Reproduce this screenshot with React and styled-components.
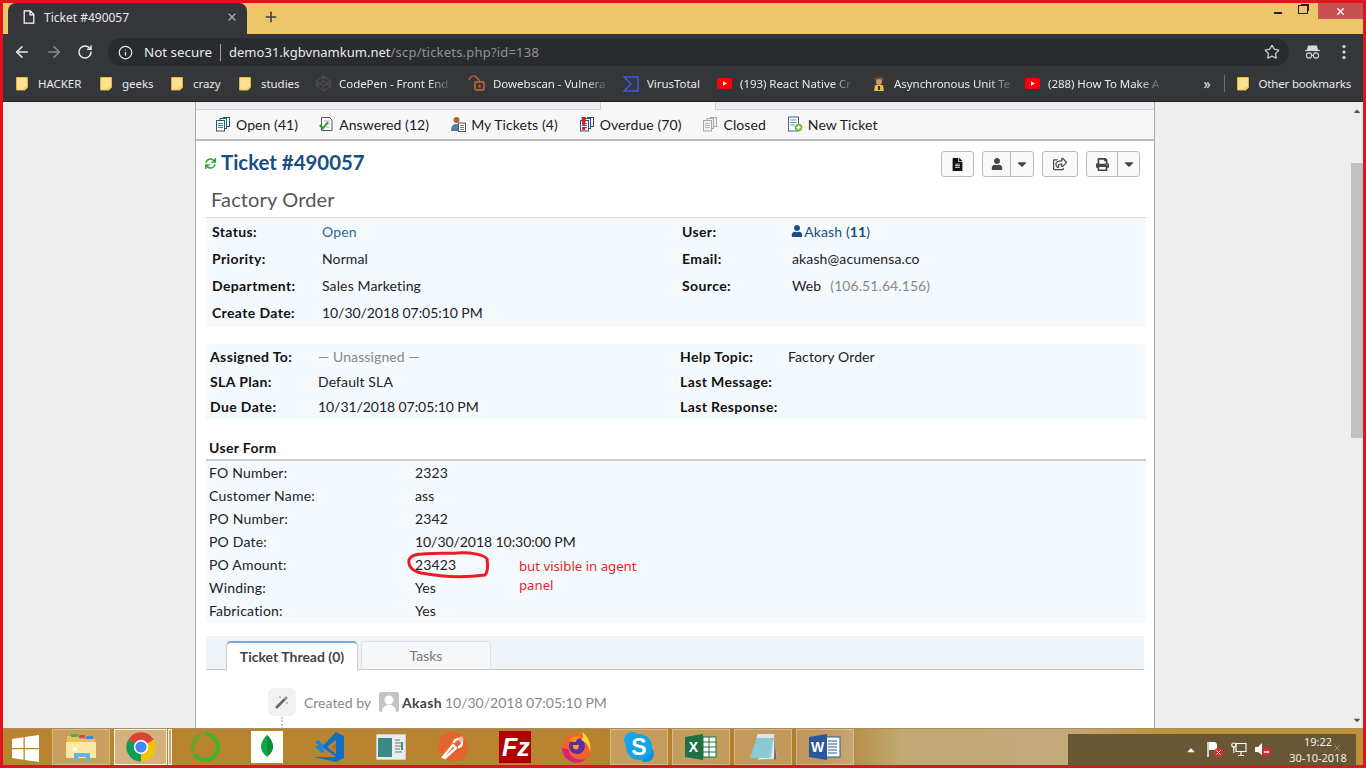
import React from "react";
import styled, { createGlobalStyle } from "styled-components";
import { ArrowLeft, ArrowRight, RotateCw, Info, Star, Plus, X } from "lucide-react";
import { FaSync, FaFileAlt, FaUser, FaRegShareSquare, FaPrint, FaCaretDown, FaCaretUp } from "react-icons/fa";

const Global = createGlobalStyle`
  html, body { margin: 0; padding: 0; overflow: hidden; background: #eee; }
  * { box-sizing: border-box; }
`;

const Frame = styled.div`
  width: 1366px; height: 768px; border: 3px solid #e0141f;
  display: flex; flex-direction: column; overflow: hidden;
  font-family: "Lato", "Liberation Sans", sans-serif; position: relative;
`;
const TitleBar = styled.div`
  height: 31px; background: #eec66a; display: flex; align-items: stretch; flex: none;
`;
const BrowserTab = styled.div`
  width: 239px; margin-left: 5px; background: #35363a; border-radius: 8px 8px 0 0;
  display: flex; align-items: center; padding: 0 9px 3px 15px; color: #e8eaed;
  font: 12px "Noto Sans", "Open Sans", sans-serif; flex: none;
`;
const TabTitle = styled.span` margin-left: 9px; flex: 1; color: #e8eaed; `;
const NewTab = styled.div`
  margin-left: 16px; padding-bottom: 3px; display: flex; align-items: center; color: #3c4043;
`;
const WindowControls = styled.div`
  margin-left: auto; display: flex; align-items: flex-start;
`;
const MinBtn = styled.div`
  width: 8px; height: 2px; background: #222; margin: 9px 16px 0 0;
`;
const RestoreBtn = styled.div`
  width: 10px; height: 9px; margin: 2px 10px 0 0; border: 1.5px solid #222; position: relative;
  box-shadow: 2px -2px 0 -1px #222;
`;
const CloseBtn = styled.div`
  width: 45px; height: 16px; background: #c75050; color: #fff; display: flex; align-items: center; justify-content: center;
`;
const Toolbar = styled.div`
  height: 32px; background: #35363a; display: flex; align-items: center; flex: none; padding: 4px 0 0 10px;
`;
const NavIcon = styled.div`
  width: 32px; display: flex; justify-content: flex-start; color: ${p => p.$dim ? "#8a8c8f" : "#e8eaed"};
`;
const Omnibox = styled.div`
  width: 1181px; height: 28px; margin-left: -1px; background: #292b2e; border-radius: 14px; display: flex; align-items: center;
  padding: 0 10px; color: #e8eaed; font: 13px "Noto Sans", "Open Sans", sans-serif; flex: none;
`;
const InfoSlot = styled.span` display: flex; width: 26px; color: #e8eaed; `;
const Secure = styled.span` font-size: 13.400px; width: 76px; `;
const Sep = styled.span` width: 1px; height: 17px; background: #9aa0a6; margin-right: 8px; `;
const Host = styled.span` color: #e8eaed; letter-spacing: .02px; `;
const UrlPath = styled.span` color: #8f9297; letter-spacing: .2px; `;
const StarSlot = styled.span` margin-left: auto; display: flex; color: #c4c7ca; margin-right: -1px; `;
const RightIcons = styled.div` display: flex; align-items: center; margin-left: 16px; gap: 22px; `;

const Bookmarks = styled.div`
  height: 36px; background: #35363a; border-bottom: 1px solid #202124; display: flex; align-items: center; padding-left: 13px; flex: none;
  color: #e8eaed; font: 11.500px "Noto Sans", "Open Sans", sans-serif; letter-spacing: -.05px;
`;
const Bookmark = styled.div`
  width: ${p => p.$w}px; display: flex; align-items: center; gap: ${p => p.$gap || 6}px; flex: none; white-space: nowrap;
`;
const BookmarkText = styled.span`
  display: block;
  ${p => p.$fade ? "mask-image: linear-gradient(90deg,#000 82%,rgba(0,0,0,.2));" : ""}
`;
const OtherText = styled.span` letter-spacing: -.18px; `;
const BookmarkEnd = styled.div`
  margin-left: auto; display: flex; align-items: center; gap: 6px; padding-right: 12px;
`;
const Chevrons = styled.span` font-size: 14px; margin-right: 7px; `;
const BarSep = styled.span` width: 1px; height: 17px; background: #6a6c70; margin-right: 6px; `;

const PageArea = styled.div`
  flex: 1; min-height: 0; display: flex; background: #eee; overflow: hidden;
`;
const Gutter = styled.div` width: 192px; flex: none; `;
const Panel = styled.div`
  width: 960px; flex: none; background: #fff; border-left: 1px solid #aaa; border-right: 1px solid #aaa;
  overflow: hidden; display: flex; flex-direction: column;
`;
const TopTabs = styled.div`
  height: 8px; flex: none; background: #eee; border-bottom: 1px solid #c9d5e0; display: flex; padding-left: 404px;
`;
const ActiveTop = styled.div`
  width: 116px; height: 8px; background: #f7f7f7; border-left: 1px solid #c9d5e0; border-right: 1px solid #c9d5e0;
`;
const SubNav = styled.div`
  height: 31px; flex: none; background: #f7f7f7; border-bottom: 2px solid #bbb; display: flex; align-items: center; padding: 0 0 1px 19px; gap: 21px;
`;
const NavItem = styled.div`
  display: flex; align-items: center; gap: 5px; font-size: 14px; color: #1a1a24; letter-spacing: .08px;
`;
const TitleRow = styled.div`
  height: 45px; flex: none; display: flex; align-items: center; padding: 1px 14px 0 9px;
`;
const TicketTitle = styled.h2`
  margin: 0 0 4px 5px; font-size: 20.400px; font-weight: 700; color: #184e81; line-height: 1;
`;
const Sync = styled.span` display: flex; color: #2ba52b; margin-bottom: 2px; `;
const ActionRow = styled.div` margin-left: auto; display: flex; gap: 8px; `;
const ActionBtn = styled.div`
  height: 26px; border: 1px solid #bbb; border-radius: 3px; background: #f9f9f9; display: flex; color: #444; font-size: 12px;
`;
const ActionPart = styled.div`
  width: ${p => p.$w}px; display: flex; align-items: center; justify-content: center; color: ${p => p.$c || "#444"};
  & + & { border-left: 1px solid #bbb; }
`;
const Subject = styled.h3`
  margin: 0; padding-left: 15px; height: 31px; flex: none; font-weight: 400; font-size: 20px; color: #555; line-height: 27px; letter-spacing: .15px;
`;
const Section = styled.div` margin-left: 10px; width: 940px; flex: none; `;
const InfoTable = styled.div`
  background: #f4f9fe; display: grid; grid-template-columns: ${p => p.$cols}; padding-left: ${p => p.$pad}px;
  grid-auto-rows: ${p => p.$row}px; align-items: center; font-size: 14px; color: #222;
  ${p => p.$top ? "border-top: 1px solid #ddd; padding-bottom: 1px; margin-bottom: 17px;" : "margin-bottom: 20px;"}
`;
const Label = styled.b` font-weight: 700; color: #111; letter-spacing: .38px; `;
const Value = styled.span`
  color: ${p => p.$c || "#222"}; letter-spacing: ${p => p.$date ? "-.06px" : ".12px"};
`;
const UserValue = styled(Value)`
  & svg { margin-right: -2px; margin-left: -1px; }
`;
const FormKey = styled.span` color: #222; letter-spacing: .2px; `;
const Muted = styled.span` color: #888; margin-left: 9px; letter-spacing: .08px; `;
const FormHead = styled.div`
  height: 22px; padding-left: 3px; border-bottom: 2px solid #ccc; font-size: 14px; font-weight: 700; color: #111; line-height: 17px; letter-spacing: .35px;
`;
const FormWrap = styled.div` position: relative; `;
const FormTable = styled.div`
  background: #f4f9fe; display: grid; grid-template-columns: 206px 1fr; padding-left: 3px; height: 161px;
  grid-auto-rows: 23px; align-items: center; font-size: 14px; color: #222;
`;
const Ring = styled.svg` position: absolute; left: 201px; top: 90px; `;
const Note = styled.div`
  position: absolute; left: 313px; top: 96px; width: 140px; color: #ed1c24; font: 13.200px/19px "Noto Sans", sans-serif;
`;
const TabStrip = styled.div`
  margin-top: 14px; height: 34px; width: 938px; background: #eef3f7; border-bottom: 1px solid #c8c8c8; display: flex; align-items: flex-end; padding-left: 20px; gap: 3px;
`;
const ThreadTab = styled.div`
  height: 29px; width: ${p => p.$w}px; border-radius: 5px 5px 0 0; display: flex; align-items: center; justify-content: center; font-size: 14px;
  margin-bottom: -1px;
  ${p => p.$active
    ? "background:#fff; border:1px solid #ccc; border-top:2px solid #7aa5d8; border-bottom:none; font-weight:700; color:#444;"
    : "background:#f5f7f9; border:1px solid #dde; border-bottom:1px solid #c8c8c8; color:#777; margin-bottom:-1px;"}
`;
const ThreadRow = styled.div`
  margin: 18px 0 0 62px; display: flex; align-items: center; font-size: 14px; color: #888;
`;
const WandBox = styled.div`
  width: 28px; height: 28px; border-radius: 6px; background: #f1f1f1; display: flex; align-items: center; justify-content: center; margin-right: 8px;
`;
const Avatar = styled.svg` margin: 0 3px 0 8px; `;
const Author = styled.b` color: #444; margin-right: 3px; letter-spacing: .3px; `;
const Dots = styled.div` margin: 1px 0 0 75px; height: 12px; border-left: 2px dotted #ccc; `;
const RightGutter = styled.div` flex: 1; `;
const Scrollbar = styled.div`
  width: 12px; flex: none; background: #eee; display: flex; flex-direction: column; align-items: center; color: #555; font-size: 10px;
`;
const ScrollArrow = styled.div` height: 17px; display: flex; align-items: center; justify-content: center; `;
const ScrollThumb = styled.div` width: 12px; height: 275px; margin-top: 44px; background: #c1c1c1; `;
const ScrollEnd = styled.div` margin-top: auto; height: 17px; display: flex; align-items: center; `;

const Taskbar = styled.div`
  height: 37px; flex: none; display: flex; position: relative; padding-left: 47px; border-top: 1px solid #a98f60;
  background: linear-gradient(90deg,#b9842f 0,#b9842f 40%,#b07c2e 60%,#c2a873 66%,#c4a97a 78%,#bb9238 86%,#bb9238 100%);
`;
const StartBtn = styled.div`
  position: absolute; left: 9px; top: 6px;
`;
const Slot = styled.div`
  width: 62px; flex: none; display: flex; align-items: center; justify-content: center; margin: 0;
`;
const OpenApp = styled(Slot)`
  width: 58px; margin: 0 2px; background: rgba(255,255,255,.22); border: 1px solid rgba(255,255,255,.28);
`;
const ActiveApp = styled(Slot)`
  width: 53px; margin: 0 1px 0 2px; background: rgba(255,255,255,.38); border: 1px solid rgba(255,255,255,.8);
`;
const Sliver = styled.div`
  width: 4px; margin-right: 2px; flex: none; background: rgba(255,255,255,.3); border: 1px solid rgba(255,255,255,.8);
`;
const Tray = styled.div`
  margin-left: auto; margin-right: 7px; align-self: flex-end; width: 288px; height: 31px; background: #685634;
  display: flex; align-items: center; padding-left: 111px; color: #eee;
`;
const TrayIcon = styled.span` width: 24px; display: flex; justify-content: center; color: #fff; `;
const Clock = styled.div`
  margin-left: 14px; font: 11px/16px "Noto Sans", sans-serif; text-align: center; width: 58px; color: #f0f0f0; position: relative;
`;
const Hide = styled.span` position: absolute; left: 43px; top: 9px; display: flex; color: #b9b88a; `;

/* ---------- drawings ---------- */
const DocIcon = () => (
  <svg width="12" height="14" viewBox="0 0 12 14" fill="none" stroke="#fff" strokeWidth="1.2"><path d="M1.2.8h6l3.6 3.6v8.8H1.2zM7 .8v4h3.8" /></svg>
);
const Folder = () => (
  <svg width="16" height="16" viewBox="0 0 16 16" style={{ flex: "none" }}>
    <path d="M.6 1.500h10.800v10l-2.500 2.500H.6z" fill="#fde293" stroke="#eabb3d" />
    <path d="M8.500 14.500v-3h3.500" fill="#eabb3d" />
  </svg>
);
const Incognito = () => (
  <svg width="15" height="16" viewBox="0 0 15 16" fill="none" stroke="#d7d9db" strokeWidth="1.1">
    <path d="M3.500 2h8l1 4h-10z" fill="#d7d9db" /><path d="M0 6.500h15" />
    <circle cx="4" cy="11.500" r="2.600" /><circle cx="11" cy="11.500" r="2.600" /><path d="M6.600 11.500h1.800" />
  </svg>
);
const MenuDots = () => (
  <svg width="4" height="14" viewBox="0 0 4 14" fill="#d7d9db"><circle cx="2" cy="1.600" r="1.600" /><circle cx="2" cy="7" r="1.600" /><circle cx="2" cy="12.400" r="1.600" /></svg>
);
const CodePen = () => (
  <svg width="17" height="17" viewBox="0 0 17 17" fill="none" stroke="#4a4b4e" strokeWidth="1.2"><path d="M8.500 1l7 5v5l-7 5-7-5V6zM8.500 1v5M8.500 11v5M1.500 6l7 5 7-5M1.500 11l7-5 7 5" /></svg>
);
const Lock = () => (
  <svg width="17" height="17" viewBox="0 0 17 17" fill="none"><path d="M1 5C2 1 6 0 8 2l4 4" stroke="#c8643a" strokeWidth="1.2" /><rect x="7" y="7" width="9" height="8" rx="1" stroke="#d36a3c" strokeWidth="1.4" /><rect x="10.500" y="10" width="2" height="2.500" fill="#d36a3c" /></svg>
);
const VirusTotal = () => (
  <svg width="16" height="16" viewBox="0 0 16 16" fill="none" stroke="#3a5bf0" strokeWidth="1.4"><path d="M1 1h14v14H1l7-7z" /></svg>
);
const YouTube = () => (
  <svg width="15" height="11" viewBox="0 0 15 11"><rect width="15" height="11" rx="2.500" fill="#f00" /><path d="M6 3.200l4 2.300-4 2.300z" fill="#fff" /></svg>
);
const Mascot = () => (
  <svg width="14" height="16" viewBox="0 0 14 16"><ellipse cx="7" cy="3" rx="5" ry="2" fill="#7a4a2a" /><circle cx="7" cy="6" r="3" fill="#c99a6a" /><path d="M3 9h8l1 6H2z" fill="#e4c13a" /><path d="M6 10h2v4H6z" fill="#3a2a1a" /></svg>
);

const Stack = ({ c, fill = "#fff" }) => (
  <g fill={fill} stroke={c} strokeWidth="1">
    <rect x="8.500" y="1.500" width="6" height="9" /><rect x="5" y="2.500" width="6.500" height="10" /><rect x="1.500" y="4.500" width="8" height="10.500" />
    <path d="M3 7.500h5M3 9.500h5M3 11.500h5" strokeWidth=".8" />
  </g>
);
const IconOpen = () => <svg width="16" height="16" viewBox="0 0 16 16"><Stack c="#1f5b7e" /></svg>;
const IconClosed = () => <svg width="16" height="16" viewBox="0 0 16 16"><Stack c="#a8a8a8" fill="#f2f2f2" /></svg>;
const IconAnswered = () => (
  <svg width="15" height="16" viewBox="0 0 15 16"><path d="M2.500 1.500h8l2.500 2.500v10.500h-10.500z" fill="#fff" stroke="#555" /><path d="M5 5h6M6 8h5M7 11h4" stroke="#999" strokeWidth=".8" /><path d="M.8 9l3 3.500L9 6" fill="none" stroke="#2e9a36" strokeWidth="2" /></svg>
);
const IconMine = () => (
  <svg width="16" height="16" viewBox="0 0 16 16"><circle cx="6.500" cy="4" r="3" fill="#a9683a" /><path d="M1 15c0-5 2-7 5-7s4 1 4 2v5z" fill="#4f7ea6" /><rect x="8.500" y="7" width="7" height="8.500" fill="#fff" stroke="#555" /><path d="M10 9.500h4M10 11.500h4M10 13.500h4" stroke="#555" strokeWidth=".8" /></svg>
);
const IconOverdue = () => (
  <svg width="16" height="16" viewBox="0 0 16 16"><Stack c="#2a4f80" /><path d="M2.500 1h4.500l-1 8.500h-2.500z" fill="#e01818" /><rect x="3.200" y="11" width="3" height="3" fill="#e01818" /></svg>
);
const IconNew = () => (
  <svg width="16" height="16" viewBox="0 0 16 16"><rect x="1.500" y="1" width="10" height="14" fill="#fff" stroke="#3b6a98" /><path d="M3.500 4h6M3.500 6.500h6M3.500 9h4" stroke="#5d92bb" /><circle cx="11.500" cy="11.500" r="3.800" fill="#6dba2f" /><path d="M9.500 11.500h4M11.500 9.500v4" stroke="#fff" strokeWidth="1.400" /></svg>
);
const Wand = () => (
  <svg width="16" height="16" viewBox="0 0 16 16"><path d="M2 14L11 5" stroke="#666" strokeWidth="2.600" /><path d="M11 5l2-2" stroke="#999" strokeWidth="2.600" /><path d="M5 3h2M6 2v2M12 9h2M13 8v2" stroke="#aaa" /></svg>
);

const Win = () => (
  <svg width="27" height="27" viewBox="0 0 27 27" fill="#fff"><path d="M0 4l11.500-1.700V13H0zM12.800 2.100L27 0v13H12.800zM0 14.300h11.500v10.500L0 23zM12.800 14.300H27V27l-14.200-2z" /></svg>
);
const Explorer = () => (
  <svg width="32" height="32" viewBox="0 0 32 32"><path d="M2 5h11l2 3h15v10H2z" fill="#e8c256" /><rect x="6" y="3" width="7" height="3" fill="#4bb04b" /><rect x="14" y="4" width="6" height="3" fill="#d9463c" /><rect x="21" y="5" width="7" height="3" fill="#2f8fd8" /><path d="M1 11h30v16H1z" fill="#fbe9a4" /><path d="M9 22h16v8h-4v-4h-8v4H9z" fill="#63b3e8" /><circle cx="10" cy="18" r="2" fill="#fff" /></svg>
);
const Chrome = () => (
  <svg width="32" height="32" viewBox="0 0 24 24"><path d="M12 12L2.470 6.500A11 11 0 0 1 21.530 6.500z" fill="#db4437" /><path d="M12 12L21.530 6.500A11 11 0 0 1 12 23z" fill="#f4c20d" /><path d="M12 12L12 23A11 11 0 0 1 2.470 6.500z" fill="#0f9d58" /><circle cx="12" cy="12" r="5.400" fill="#fff" /><circle cx="12" cy="12" r="4.200" fill="#4285f4" /></svg>
);
const GreenRing = () => (
  <svg width="32" height="32" viewBox="0 0 32 32" fill="none"><path d="M16 3a13 13 0 1 1-11 20" stroke="#3fb42f" strokeWidth="4" /><path d="M4.500 21a13 13 0 0 1 8-17" stroke="#3fb42f" strokeWidth="4" strokeDasharray="2 1.500" /></svg>
);
const Mongo = () => (
  <svg width="32" height="32" viewBox="0 0 32 32"><rect width="32" height="32" fill="#fff" /><path d="M16 4c5 5 6 9 6 12s-3 8-5.500 9l-.5 3-.5-3C13 24 10 19 10 16s1-7 6-12z" fill="#13a54a" /><path d="M16 4c5 5 6 9 6 12s-3 8-5.500 9z" fill="#0c8a3c" /></svg>
);
const VSCode = () => (
  <svg width="32" height="32" viewBox="0 0 32 32"><path d="M23 1l8 4v22l-8 4L1 26l22 0V1z" fill="#0f6fc6" /><path d="M23 1v8L14 16l9 7v3L9 16z" fill="#0f6fc6" /><path d="M2 11l3-2 7 6-3 2 3 3-3 2-7-6 4-2z" fill="#1a83db" /><path d="M18 16l5-4v8z" fill="#b0703a" /></svg>
);
const WindowApp = () => (
  <svg width="30" height="26" viewBox="0 0 30 26"><rect width="30" height="26" fill="#e9edf0" stroke="#aab" /><rect x="2" y="4" width="14" height="19" fill="#3c8a86" /><path d="M19 6h5M19 9h7M19 12h7M19 15h5M19 18h7" stroke="#777" /><rect x="25" y="8" width="2" height="8" fill="#3a9a5a" /></svg>
);
const PostApp = () => (
  <svg width="32" height="32" viewBox="0 0 32 32"><circle cx="16" cy="16" r="15" fill="#e4632f" /><path d="M6 26l10-12 3 3-11 10zM17 12a4 4 0 1 1 4 4" stroke="#fff" strokeWidth="2.400" fill="none" /><circle cx="24" cy="8" r="2.500" fill="#f2b9a0" /></svg>
);
const FileZilla = () => (
  <svg width="32" height="32" viewBox="0 0 32 32"><rect width="32" height="32" fill="#b30000" stroke="#7d0000" strokeDasharray="1.500 1.500" /><text x="3" y="25" fontFamily="Liberation Sans" fontWeight="700" fontStyle="italic" fontSize="25" fill="#fff">Fz</text></svg>
);
const Firefox = () => (
  <svg width="32" height="32" viewBox="0 0 32 32"><circle cx="15.500" cy="17" r="14.500" fill="#f2622e" /><path d="M1 17a14.500 14.500 0 0 0 24 11c-8 2-16-1-18-10z" fill="#d6246e" /><circle cx="16" cy="15" r="8" fill="#5a2fa6" /><path d="M21 1c6 4 10 12 8 20-1-6-4-10-9-12 3-2 2-5 1-8z" fill="#ffd23a" /><path d="M8 10c3-5 9-6 13-3-4 0-6 2-6 4-2 0-4 0-7-1z" fill="#f79020" /><path d="M12 14h6l-1 4c-2 1-4 0-5-1z" fill="#ff9a2a" /></svg>
);
const Skype = () => (
  <svg width="32" height="32" viewBox="0 0 32 32"><circle cx="9" cy="9" r="8" fill="#12a8ee" /><circle cx="23" cy="23" r="8" fill="#0d8fe0" /><circle cx="16" cy="16" r="13" fill="#12a3e9" /><text x="16" y="24" textAnchor="middle" fontFamily="Liberation Sans" fontWeight="700" fontSize="23" fill="#fff">S</text></svg>
);
const Excel = () => (
  <svg width="32" height="26" viewBox="0 0 32 26"><rect x="14" y="3" width="17" height="20" fill="#fff" stroke="#1e7145" /><path d="M18 3v20M24 3v20M14 8h17M14 13h17M14 18h17" stroke="#1e7145" /><path d="M0 3l18-3v26L0 23z" fill="#1e7145" /><text x="8.500" y="18" textAnchor="middle" fontFamily="Liberation Sans" fontWeight="700" fontSize="14" fill="#fff">X</text></svg>
);
const Notepad = () => (
  <svg width="32" height="32" viewBox="0 0 32 32"><path d="M27 7l3 21-20 1z" fill="#e8e8e8" stroke="#aaa" /><path d="M11 4h16l-3 23H3z" fill="#9ad5dc" /><path d="M11 4h16l-5 23H3z" fill="#7cc0c8" opacity=".5" /><path d="M10.500 3h17l-.5 4H9.500z" fill="#dfe5e8" /><path d="M27.500 8l2 20-2.500 1z" fill="#7a6a4e" /></svg>
);
const Word = () => (
  <svg width="32" height="26" viewBox="0 0 32 26"><rect x="14" y="3" width="17" height="20" fill="#fff" stroke="#2b579a" /><path d="M19 7h9M19 10h9M19 13h9M19 16h9M19 19h9" stroke="#2b579a" /><path d="M0 3l18-3v26L0 23z" fill="#2b579a" /><text x="8.500" y="18" textAnchor="middle" fontFamily="Liberation Sans" fontWeight="700" fontSize="14" fill="#fff">W</text></svg>
);
const TrayFlag = () => (
  <svg width="18" height="17" viewBox="0 0 18 17"><path d="M2 1v15" stroke="#fff" strokeWidth="1.400" /><path d="M3 1h6l2 2v6H3z" fill="#fff" /><circle cx="12.500" cy="11.500" r="4.500" fill="#e02b2b" /><path d="M10.500 9.500l4 4M14.500 9.500l-4 4" stroke="#fff" /></svg>
);
const TrayNet = () => (
  <svg width="16" height="15" viewBox="0 0 16 15" fill="none" stroke="#fff" strokeWidth="1.100"><rect x="5" y="1.500" width="10" height="8" /><path d="M10 10v3M7 13.500h6" /><circle cx="2.800" cy="3" r="2" /><path d="M2.800 5v6" /></svg>
);
const TraySound = () => (
  <svg width="17" height="14" viewBox="0 0 17 14"><path d="M0 4h3l4-4v12L3 9H0z" fill="#fff" /><circle cx="11.500" cy="9" r="4.500" fill="#e02b2b" /><path d="M9 9h5" stroke="#fff" strokeWidth="1.600" /></svg>
);

const navItems = [
  [IconOpen, "Open (41)"], [IconAnswered, "Answered (12)"], [IconMine, "My Tickets (4)"],
  [IconOverdue, "Overdue (70)"], [IconClosed, "Closed"], [IconNew, "New Ticket"],
];
const formRows = [
  ["FO Number:", "2323"], ["Customer Name:", "ass"], ["PO Number:", "2342"], ["PO Date:", "10/30/2018 10:30:00 PM", true],
  ["PO Amount:", "23423"], ["Winding:", "Yes"], ["Fabrication:", "Yes"],
];

export default function App() {
  return (
    <Frame>
      <Global />
      <TitleBar>
        <BrowserTab>
          <DocIcon /><TabTitle>Ticket #490057</TabTitle><X size={12} color="#aeb0b3" strokeWidth={2.4} />
        </BrowserTab>
        <NewTab><Plus size={16} strokeWidth={2.4} /></NewTab>
        <WindowControls>
          <MinBtn /><RestoreBtn /><CloseBtn><X size={11} strokeWidth={3} /></CloseBtn>
        </WindowControls>
      </TitleBar>
      <Toolbar>
        <NavIcon><ArrowLeft size={18} strokeWidth={2.2} /></NavIcon>
        <NavIcon $dim><ArrowRight size={18} strokeWidth={2.2} /></NavIcon>
        <NavIcon><RotateCw size={16} strokeWidth={2.2} /></NavIcon>
        <Omnibox>
          <InfoSlot><Info size={15} /></InfoSlot>
          <Secure>Not secure</Secure><Sep />
          <Host>demo31.kgbvnamkum.net</Host><UrlPath>/scp/tickets.php?id=138</UrlPath>
          <StarSlot><Star size={16} /></StarSlot>
        </Omnibox>
        <RightIcons><Incognito /><MenuDots /></RightIcons>
      </Toolbar>
      <Bookmarks>
        <Bookmark $w={84}><Folder /><BookmarkText>HACKER</BookmarkText></Bookmark>
        <Bookmark $w={71}><Folder /><BookmarkText>geeks</BookmarkText></Bookmark>
        <Bookmark $w={68}><Folder /><BookmarkText>crazy</BookmarkText></Bookmark>
        <Bookmark $w={76}><Folder /><BookmarkText>studies</BookmarkText></Bookmark>
        <Bookmark $w={153} $gap={7}><CodePen /><BookmarkText $fade>CodePen - Front End</BookmarkText></Bookmark>
        <Bookmark $w={155} $gap={8}><Lock /><BookmarkText $fade>Dowebscan - Vulnera</BookmarkText></Bookmark>
        <Bookmark $w={94} $gap={8}><VirusTotal /><BookmarkText>VirusTotal</BookmarkText></Bookmark>
        <Bookmark $w={155} $gap={8}><YouTube /><BookmarkText $fade>(193) React Native Cr</BookmarkText></Bookmark>
        <Bookmark $w={153} $gap={8}><Mascot /><BookmarkText $fade>Asynchronous Unit Te</BookmarkText></Bookmark>
        <Bookmark $w={145} $gap={8}><YouTube /><BookmarkText $fade>(288) How To Make A</BookmarkText></Bookmark>
        <BookmarkEnd>
          <Chevrons>»</Chevrons><BarSep /><Folder /><OtherText>Other bookmarks</OtherText>
        </BookmarkEnd>
      </Bookmarks>
      <PageArea>
        <Gutter />
        <Panel>
          <TopTabs><ActiveTop /></TopTabs>
          <SubNav>
            {navItems.map(([I, t]) => <NavItem key={t}><I />{t}</NavItem>)}
          </SubNav>
          <TitleRow>
            <Sync><FaSync size={11} /></Sync>
            <TicketTitle>Ticket #490057</TicketTitle>
            <ActionRow>
              <ActionBtn><ActionPart $w={31} $c="#111"><FaFileAlt size={13} /></ActionPart></ActionBtn>
              <ActionBtn><ActionPart $w={27}><FaUser size={12} /></ActionPart><ActionPart $w={23}><FaCaretDown size={14} /></ActionPart></ActionBtn>
              <ActionBtn><ActionPart $w={34}><FaRegShareSquare size={14} /></ActionPart></ActionBtn>
              <ActionBtn><ActionPart $w={30}><FaPrint size={13} /></ActionPart><ActionPart $w={22}><FaCaretDown size={14} /></ActionPart></ActionBtn>
            </ActionRow>
          </TitleRow>
          <Subject>Factory Order</Subject>
          <Section>
            <InfoTable $top $cols="110px 360px 110px 1fr" $pad={6} $row={27}>
              <Label>Status:</Label><Value $c="#2a6a8e">Open</Value><Label>User:</Label>
              <UserValue $c="#184e81"><FaUser size={12} /> Akash (<b>11</b>)</UserValue>
              <Label>Priority:</Label><Value>Normal</Value><Label>Email:</Label><Value>akash@acumensa.co</Value>
              <Label>Department:</Label><Value>Sales Marketing</Value><Label>Source:</Label>
              <Value>Web<Muted>(106.51.64.156)</Muted></Value>
              <Label>Create Date:</Label><Value $date>10/30/2018 07:05:10 PM</Value><span /><span />
            </InfoTable>
            <InfoTable $cols="108px 362px 108px 1fr" $pad={4} $row={25}>
              <Label>Assigned To:</Label><Value $c="#888">— Unassigned —</Value><Label>Help Topic:</Label><Value>Factory Order</Value>
              <Label>SLA Plan:</Label><Value>Default SLA</Value><Label>Last Message:</Label><span />
              <Label>Due Date:</Label><Value $date>10/31/2018 07:05:10 PM</Value><Label>Last Response:</Label><span />
            </InfoTable>
            <FormHead>User Form</FormHead>
            <FormWrap>
              <FormTable>
                {formRows.map(([k, v, d]) => (
                  <React.Fragment key={k}><FormKey>{k}</FormKey><Value $date={d}>{v}</Value></React.Fragment>
                ))}
              </FormTable>
              <Ring width="84" height="28" viewBox="0 0 84 28" fill="none">
                <path d="M8 4C24 1 42 3 50 2C64 1 78 4 80 8C81 15 81 21 78 24C55 27 30 25 14 22C5 20 1 15 2 9C3 6 6 4 12 3" stroke="#ed1c24" strokeWidth="3" />
              </Ring>
              <Note>but visible in agent panel</Note>
            </FormWrap>
            <TabStrip>
              <ThreadTab $active $w={132}>Ticket Thread (0)</ThreadTab>
              <ThreadTab $w={130}>Tasks</ThreadTab>
            </TabStrip>
            <ThreadRow>
              <WandBox><Wand /></WandBox>Created by
              <Avatar width="20" height="20" viewBox="0 0 20 20"><rect width="20" height="20" rx="2" fill="#c4c4c4" /><circle cx="10" cy="8" r="4.500" fill="#fff" /><path d="M3 20c0-5 3-7 7-7s7 2 7 7z" fill="#fff" /></Avatar>
              <Author>Akash</Author>10/30/2018 07:05:10 PM
            </ThreadRow>
            <Dots />
          </Section>
        </Panel>
        <RightGutter />
        <Scrollbar>
          <ScrollArrow><FaCaretUp /></ScrollArrow>
          <ScrollThumb />
          <ScrollEnd><FaCaretDown /></ScrollEnd>
        </Scrollbar>
      </PageArea>
      <Taskbar>
        <StartBtn><Win /></StartBtn>
        <OpenApp><Explorer /></OpenApp>
        <ActiveApp><Chrome /></ActiveApp>
        <Sliver />
        <Slot><GreenRing /></Slot>
        <Slot><Mongo /></Slot>
        <Slot><VSCode /></Slot>
        <Slot><WindowApp /></Slot>
        <Slot><PostApp /></Slot>
        <Slot><FileZilla /></Slot>
        <Slot><Firefox /></Slot>
        <OpenApp><Skype /></OpenApp>
        <OpenApp><Excel /></OpenApp>
        <OpenApp><Notepad /></OpenApp>
        <OpenApp><Word /></OpenApp>
        <Tray>
          <TrayIcon><FaCaretUp size={12} /></TrayIcon>
          <TrayIcon><TrayFlag /></TrayIcon>
          <TrayIcon><TrayNet /></TrayIcon>
          <TrayIcon><TraySound /></TrayIcon>
          <Clock>19:22<Hide><X size={10} strokeWidth={1.5} /></Hide><br />30-10-2018</Clock>
        </Tray>
      </Taskbar>
    </Frame>
  );
}
